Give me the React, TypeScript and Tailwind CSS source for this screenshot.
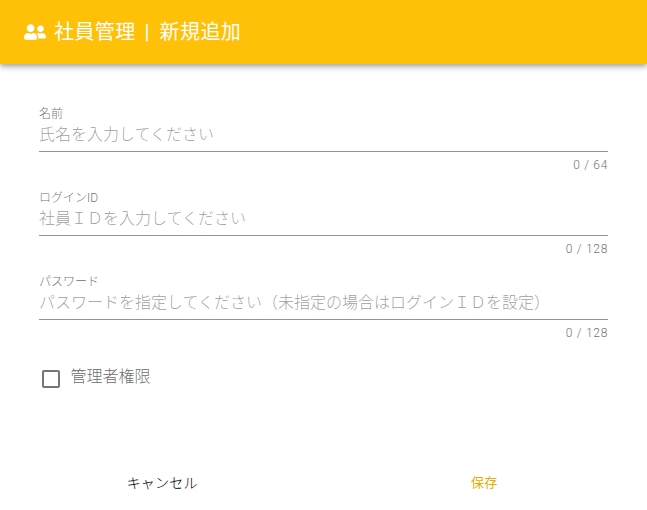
import { FaUserFriends } from "react-icons/fa"

const font = "font-['Roboto','Noto_Sans_CJK_JP',sans-serif]"

const fields = [
  { label: "名前", placeholder: "氏名を入力してください", max: 64 },
  { label: "ログインID", placeholder: "社員ＩＤを入力してください", max: 128 },
  { label: "パスワード", placeholder: "パスワードを指定してください（未指定の場合はログインＩＤを設定）", max: 128 },
]

const Field = ({ label, placeholder, max }: { label: string; placeholder: string; max: number }) => {
  return (
    <div className="h-[84px] flex flex-col">
      <div className="h-[17px] mt-[1px] text-xs font-light leading-[17px] text-black/60">{label}</div>
      <div className="h-[26px] mt-[-1px] text-base font-light leading-[26px] text-black/40 whitespace-nowrap">{placeholder}</div>
      <div className="h-px bg-[#949494] mt-[3px]" />
      <div className="mt-[6px] text-xs font-light tracking-[0.7px] leading-[14px] text-[#757575] text-right">0 / {max}</div>
    </div>
  )
}

export default function App() {
  return (
    <div className={`${font} w-[647px] h-[510px] bg-white flex flex-col overflow-hidden`}>
      <header className="h-16 shrink-0 bg-[#ffc107] shadow-[0_2px_4px_-1px_rgba(0,0,0,0.2),0_4px_5px_0_rgba(0,0,0,0.14),0_1px_10px_0_rgba(0,0,0,0.12)] flex items-center pl-[24px] gap-[8px]">
        <FaUserFriends className="w-[22px] h-[22px] text-white" />
        <h1 className="text-xl tracking-[0.4px] text-white whitespace-nowrap flex items-center">
          <span>社員管理</span>
          <span className="w-[23px] font-medium text-center">|</span>
          <span className="ml-[1px]">新規追加</span>
        </h1>
      </header>

      <main className="flex-1 flex flex-col px-[39px] pt-[41px]">
        {fields.map((f) => (
          <Field key={f.label} {...f} />
        ))}
        <div className="flex items-start ml-[-1px] gap-2">
          <svg width="24" height="24" viewBox="0 0 24 24" fill="#757575" className="mt-[10px] ml-[0.5px]">
            <path d="M19 5v14H5V5h14m0-2H5c-1.1 0-2 .9-2 2v14c0 1.1.9 2 2 2h14c1.1 0 2-.9 2-2V5c0-1.1-.9-2-2-2z" />
          </svg>
          <span className="mt-[8px] text-base font-light leading-6 text-black/60">管理者権限</span>
        </div>
      </main>

      <footer className="grid grid-cols-2 h-[54px] shrink-0 pb-[1px]">
        <button className="text-sm font-light tracking-[0.25px] pl-[1px] text-black">キャンセル</button>
        <button className="text-[13px] tracking-[0.3px] pr-[2px] text-[#e6ad00]">保存</button>
      </footer>
    </div>
  )
}
